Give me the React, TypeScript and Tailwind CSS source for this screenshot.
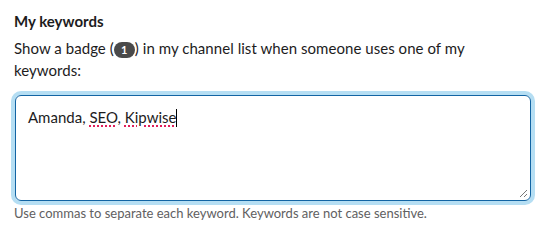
import React from "react";

export default function App() {
  return (
    <div className="w-[554px] h-[235px] bg-white text-[#1d1c1d]" style={{ fontFamily: "Lato, 'Noto Sans', sans-serif" }}>
      <div className="px-[14px] pt-[10px]">
        <div className="text-[15px] font-bold leading-[22px]">My keywords</div>
        <p className="mt-[5px] text-[15px] leading-[22px] pr-[30px] tracking-[0.05px]">
          Show a badge (<span className="inline-block h-[16px] w-[21px] rounded-full bg-[#4a4a4a] text-white text-[11px] font-bold text-center leading-[16px] align-middle">1</span>) in my channel list when someone uses one of my keywords:
        </p>
        <div className="mt-[14px] mr-[9px] ml-[1px] rounded-[6px] border border-[#1264a3] ring-4 ring-[#b5def3]">
          <div className="relative h-[104px] px-[12px] pt-[10px] text-[15px] leading-[22px]">
            <span>Amanda, </span>
            <span className="underline decoration-dotted decoration-[#e01e5a] decoration-2 underline-offset-[2px]">SEO</span>
            <span>, </span>
            <span className="underline decoration-dotted decoration-[#e01e5a] decoration-2 underline-offset-[2px]">Kipwise</span>
            <span className="inline-block w-px h-[18px] bg-black align-[-4px]" />
            <svg className="absolute right-[2px] bottom-[2px]" width="9" height="9" viewBox="0 0 9 9">
              <path d="M8 1 L1 8 M8 5 L5 8" stroke="#777" strokeWidth="1" />
            </svg>
          </div>
        </div>
        <div className="mt-[3px] text-[13px] leading-[18px] text-[#616061]">
          Use commas to separate each keyword. Keywords are not case sensitive.
        </div>
      </div>
    </div>
  );
}
